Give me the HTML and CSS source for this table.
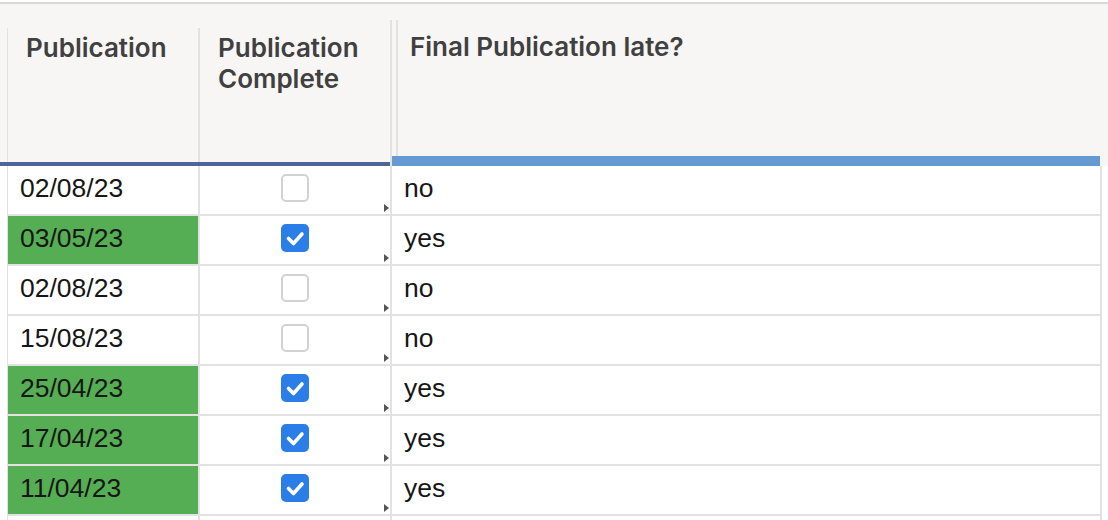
FILE: index.html
```html
<!DOCTYPE html>
<html>
<head>
<meta charset="utf-8">
<link rel="stylesheet" href="styles.css">
</head>
<body>
<div class="sheet">
  <div class="topline"></div>
  <div class="hdr">
    <div class="hlead"><div class="hspace"></div><div class="bar-dark"></div></div>
    <div class="hc hc1"><div class="hbody">Publication</div><div class="bar-dark"></div></div>
    <div class="hc hc2"><div class="hbody">Publication<br>Complete</div><div class="bar-dark"></div></div>
    <div class="hc3"><div class="hbody3">Final Publication late?</div><div class="bar-light"></div></div>
    <div class="hrest"></div>
  </div>
  <div class="rows">
    <div class="row"><div class="cell date">02/08/23</div><div class="cell chk"><span class="box"></span><i class="tri"></i></div><div class="cell txt">no</div></div>
    <div class="row"><div class="cell date green">03/05/23</div><div class="cell chk"><span class="box on"><svg viewBox="0 0 28 28" width="28" height="28"><path d="M7.5 14.5 L12.5 19.5 L21 10" fill="none" stroke="#fff" stroke-width="3.6" stroke-linecap="round" stroke-linejoin="round"/></svg></span><i class="tri"></i></div><div class="cell txt">yes</div></div>
    <div class="row"><div class="cell date">02/08/23</div><div class="cell chk"><span class="box"></span><i class="tri"></i></div><div class="cell txt">no</div></div>
    <div class="row"><div class="cell date">15/08/23</div><div class="cell chk"><span class="box"></span><i class="tri"></i></div><div class="cell txt">no</div></div>
    <div class="row"><div class="cell date green">25/04/23</div><div class="cell chk"><span class="box on"><svg viewBox="0 0 28 28" width="28" height="28"><path d="M7.5 14.5 L12.5 19.5 L21 10" fill="none" stroke="#fff" stroke-width="3.6" stroke-linecap="round" stroke-linejoin="round"/></svg></span><i class="tri"></i></div><div class="cell txt">yes</div></div>
    <div class="row"><div class="cell date green">17/04/23</div><div class="cell chk"><span class="box on"><svg viewBox="0 0 28 28" width="28" height="28"><path d="M7.5 14.5 L12.5 19.5 L21 10" fill="none" stroke="#fff" stroke-width="3.6" stroke-linecap="round" stroke-linejoin="round"/></svg></span><i class="tri"></i></div><div class="cell txt">yes</div></div>
    <div class="row"><div class="cell date green">11/04/23</div><div class="cell chk"><span class="box on"><svg viewBox="0 0 28 28" width="28" height="28"><path d="M7.5 14.5 L12.5 19.5 L21 10" fill="none" stroke="#fff" stroke-width="3.6" stroke-linecap="round" stroke-linejoin="round"/></svg></span><i class="tri"></i></div><div class="cell txt">yes</div></div>
    <div class="row"><div class="cell date"></div><div class="cell chk"></div><div class="cell txt"></div></div>
  </div>
</div>
</body>
</html>
```
FILE: styles.css
```css
html, body {
  margin: 0;
  padding: 0;
  background: #ffffff;
  overflow: hidden;
}
.sheet {
  width: 1108px;
  height: 520px;
  overflow: hidden;
  padding-top: 2px;
  box-sizing: border-box;
}
.topline {
  height: 2px;
  background: #d8d8d8;
}
.hdr {
  display: flex;
  height: 162px;
  background: #f7f6f4;
  font-family: "Inter", "Noto Sans", sans-serif;
  font-weight: 600;
  font-size: 26px;
  line-height: 31px;
  color: #404040;
}
.hlead {
  width: 7px;
  display: flex;
  flex-direction: column;
}
.hspace { flex: 1; }
.bar-dark {
  height: 4px;
  background: #4e6597;
}
.hc {
  display: flex;
  flex-direction: column;
}
.hc1 { width: 191px; }
.hc2 { width: 192px; }
.hbody {
  flex: 1;
  margin-top: 24px;
  padding-top: 4px;
  padding-left: 18px;
  border-left: 1px solid #e2e2e2;
}
.hc2 .hbody {
  border-left-width: 2px;
  padding-left: 18px;
}
.hc3 {
  width: 708px;
  margin-top: 16px;
  border-left: 2px solid #e2e2e2;
  display: flex;
  flex-direction: column;
}
.hbody3 {
  flex: 1;
  margin-left: 4px;
  border-left: 2px solid #e2e2e2;
  padding-left: 12px;
  padding-top: 11px;
}
.bar-light {
  height: 10px;
  background: #6599d2;
}
.hrest { flex: 1; }

.rows {
  font-family: "Liberation Sans", Arial, sans-serif;
  font-size: 26.5px;
  color: #161616;
}
.row {
  display: grid;
  grid-template-columns: 190px 190px 708px;
  column-gap: 2px;
  width: 1092px;
  margin-left: 7px;
  background: #e2e2e2;
  border-left: 1px solid #e2e2e2;
  border-right: 2px solid #e2e2e2;
  border-bottom: 2px solid #e2e2e2;
}
.cell {
  background: #ffffff;
  height: 48px;
  line-height: 44px;
  position: relative;
}
.date { padding-left: 12px; }
.green { background: #56ae54; }
.txt { padding-left: 12px; }
.chk {
  display: flex;
  justify-content: center;
  align-items: flex-start;
  padding-top: 8px;
  box-sizing: border-box;
}
.box {
  width: 28px;
  height: 28px;
  box-sizing: border-box;
  border: 2px solid #d2d2d2;
  border-radius: 5px;
  background: #ffffff;
  display: block;
}
.box.on {
  border: none;
  background: #2b7de8;
}
.box svg { display: block; }
.tri {
  position: absolute;
  right: 1px;
  bottom: 2px;
  width: 0;
  height: 0;
  border-left: 5px solid #555555;
  border-top: 4px solid transparent;
  border-bottom: 4px solid transparent;
}
```
